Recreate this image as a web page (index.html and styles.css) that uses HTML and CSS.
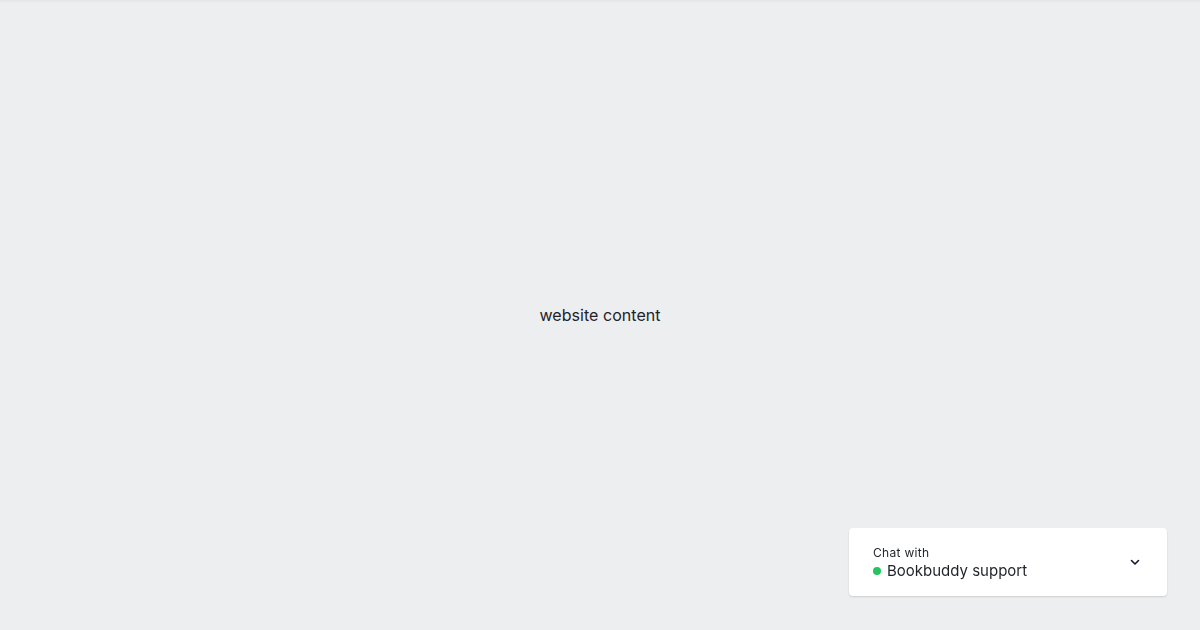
FILE: index.html
```html
<!DOCTYPE html>
<html lang="en">
<head>
<meta charset="utf-8">
<title>Website</title>
<link rel="stylesheet" href="styles.css">
</head>
<body>
<main class="page">
  <p class="content">website content</p>
</main>
<aside class="chat">
  <div class="chat-info">
    <div class="chat-label">Chat with</div>
    <div class="chat-name"><span class="dot"></span>Bookbuddy support</div>
  </div>
  <svg class="chevron" width="12" height="12" viewBox="0 0 12 12" aria-hidden="true">
    <path d="M2.5 4.5 L6 8 L9.5 4.5" fill="none" stroke="#111827" stroke-width="1.6" stroke-linecap="round" stroke-linejoin="round"/>
  </svg>
</aside>
</body>
</html>
```

FILE: styles.css
```css
html, body {
  margin: 0;
  padding: 0;
  height: 100%;
}
body {
  background: #eceef0;
  font-family: Inter, "Noto Sans", sans-serif;
  color: #1f2328;
}
.page {
  height: 100%;
  display: flex;
  align-items: center;
  justify-content: center;
  box-shadow: inset 0 3px 3px -2px rgba(0,0,0,0.06);
}
.content {
  margin: 0;
  font-size: 16px;
  line-height: 20px;
  letter-spacing: 0.05px;
}
.chat {
  position: fixed;
  right: 33px;
  bottom: 34px;
  width: 318px;
  height: 68px;
  box-sizing: border-box;
  background: #ffffff;
  border-radius: 4px;
  box-shadow: 0 1px 2px rgba(0,0,0,0.14);
  display: flex;
  align-items: center;
  justify-content: space-between;
  padding: 0 26px 0 24px;
}
.chat-info {
  display: flex;
  flex-direction: column;
  gap: 1px;
}
.chat-label {
  font-size: 12px;
  line-height: 16px;
  letter-spacing: 0.3px;
  color: #1f2328;
}
.chat-name {
  display: flex;
  align-items: center;
  gap: 6px;
  font-size: 15px;
  line-height: 18px;
  color: #1f2328;
}
.dot {
  width: 8px;
  height: 8px;
  border-radius: 50%;
  background: #22c55e;
}
.chevron {
  display: block;
}
```
